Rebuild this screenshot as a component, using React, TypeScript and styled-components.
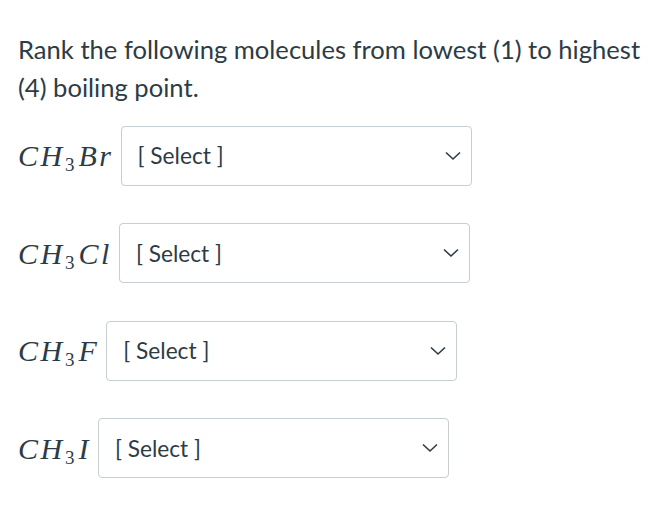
import React from "react";
import styled, { createGlobalStyle } from "styled-components";

const GlobalStyle = createGlobalStyle`
  body {
    margin: 0;
    background: #ffffff;
    font-family: Lato, "Open Sans", sans-serif;
    color: #2d3b45;
  }
`;

const Page = styled.div`
  padding: 30px 0 0 18px;
`;

const Question = styled.p`
  margin: 0 0 19.5px 0;
  font-size: 25.6px;
  line-height: 38px;
  color: #2d3b45;
  max-width: 636px;
`;

const Rows = styled.div`
  display: flex;
  flex-direction: column;
  gap: 37.5px;
`;

const Row = styled.div`
  display: flex;
  align-items: center;
  gap: 7px;
`;

const Formula = styled.span`
  font-family: "Liberation Serif", "DejaVu Serif", serif;
  font-style: italic;
  font-size: 30px;
  letter-spacing: 2.6px;
  color: #2d3b45;
  white-space: nowrap;
  padding-top: 4px;
`;

const Sub = styled.sub`
  font-style: normal;
  font-size: 19px;
  letter-spacing: 0;
  vertical-align: -5px;
  margin-right: 4px;
`;

const SelectBox = styled.div`
  box-sizing: border-box;
  width: 351px;
  height: 60px;
  border: 1px solid #c7cdd1;
  border-radius: 4px;
  display: flex;
  align-items: center;
  justify-content: space-between;
  padding: 0 10px 0 16px;
  font-size: 22.7px;
  color: #2d3b45;
  background: #fff;
`;

const Chevron = () => (
  <svg width="16" height="10" viewBox="0 0 16 10" fill="none">
    <path d="M1 1.5 L8 8 L15 1.5" stroke="#2d3b45" strokeWidth="1.6" />
  </svg>
);

const items = [
  { base: "CH", sub: "3", rest: "Br" },
  { base: "CH", sub: "3", rest: "Cl" },
  { base: "CH", sub: "3", rest: "F" },
  { base: "CH", sub: "3", rest: "I" },
];

export default function App() {
  return (
    <>
      <GlobalStyle />
      <Page>
        <Question>Rank the following molecules from lowest (1) to highest (4) boiling point.</Question>
        <Rows>
          {items.map((m) => (
            <Row key={m.rest}>
              <Formula>
                {m.base}
                <Sub>{m.sub}</Sub>
                {m.rest}
              </Formula>
              <SelectBox>
                <span>[ Select ]</span>
                <Chevron />
              </SelectBox>
            </Row>
          ))}
        </Rows>
      </Page>
    </>
  );
}
